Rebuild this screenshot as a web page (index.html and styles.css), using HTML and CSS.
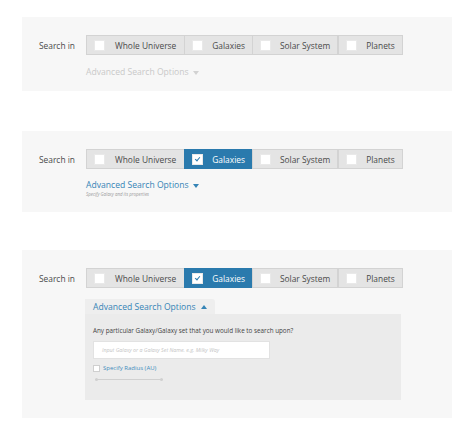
FILE: index.html
```html
<!DOCTYPE html>
<html lang="en">
<head>
    <meta charset="UTF-8">
    <title>Search Options</title>
    <link rel="stylesheet" href="styles.css">
</head>
<body>
    <!-- collapsed, nothing picked -->
    <div class="panel panel-one">
        <div class="search-row">
            <span class="search-label">Search in</span>
            <div class="tabs">
                <div class="tab tab-wide"><span class="box"></span><span>Whole Universe</span></div>
                <div class="tab"><span class="box"></span><span>Galaxies</span></div>
                <div class="tab"><span class="box"></span><span>Solar System</span></div>
                <div class="tab tab-last"><span class="box"></span><span>Planets</span></div>
            </div>
        </div>
        <div class="advanced">
            <div class="adv-link disabled">Advanced Search Options <span class="arrow down"></span></div>
        </div>
    </div>

    <!-- galaxies picked -->
    <div class="panel panel-two">
        <div class="search-row">
            <span class="search-label">Search in</span>
            <div class="tabs">
                <div class="tab tab-wide"><span class="box"></span><span>Whole Universe</span></div>
                <div class="tab active"><span class="box checked"></span><span>Galaxies</span></div>
                <div class="tab"><span class="box"></span><span>Solar System</span></div>
                <div class="tab tab-last"><span class="box"></span><span>Planets</span></div>
            </div>
        </div>
        <div class="advanced">
            <div class="adv-link">Advanced Search Options <span class="arrow down"></span></div>
            <div class="adv-hint">Specify Galaxy and its properties</div>
        </div>
    </div>

    <!-- options opened -->
    <div class="panel panel-three">
        <div class="search-row">
            <span class="search-label">Search in</span>
            <div class="tabs">
                <div class="tab tab-wide"><span class="box"></span><span>Whole Universe</span></div>
                <div class="tab active"><span class="box checked"></span><span>Galaxies</span></div>
                <div class="tab"><span class="box"></span><span>Solar System</span></div>
                <div class="tab tab-last"><span class="box"></span><span>Planets</span></div>
            </div>
        </div>
        <div class="advanced open">
            <div class="adv-head">Advanced Search Options <span class="arrow up"></span></div>
            <div class="adv-body">
                <p class="question">Any particular Galaxy/Galaxy set that you would like to search upon?</p>
                <div class="galaxy-input">Input Galaxy or a Galaxy Set Name. e.g. Milky Way</div>
                <label class="radius"><span class="small-box"></span>Specify Radius (AU)</label>
                <div class="slider"><span class="knob"></span><span class="knob"></span></div>
            </div>
        </div>
    </div>
</body>
</html>
```

FILE: styles.css
```css
body {
    margin: 0;
    padding-top: 17px;
    background-color: #ffffff;
    font-family: "Open Sans", "DejaVu Sans", sans-serif;
    color: #444444;
}
.panel {
    margin-left: 22px;
    width: 430px;
    background-color: #f7f7f7;
    padding: 18px 0 0 17px;
    box-sizing: border-box;
}
.panel-one {
    height: 74px;
    margin-bottom: 40px;
}
.panel-two {
    height: 81px;
    margin-bottom: 38px;
}
.panel-three {
    height: 168px;
}
.search-row {
    display: flex;
    align-items: center;
}
.search-label {
    width: 47px;
    font-size: 8.4px;
    color: #4a4a4a;
}
.tabs {
    display: flex;
    height: 20px;
}
.tab {
    display: flex;
    align-items: center;
    gap: 9px;
    padding: 0 7px 0 7px;
    background-color: #e4e4e4;
    border: 1px solid #d3d3d3;
    margin-left: -1px;
    font-size: 8.4px;
    color: #4a4a4a;
}
.tab-wide {
    margin-left: 0;
    gap: 10px;
    padding-right: 8px;
}
.tab-last {
    margin-left: 0;
}
.tab.active {
    background-color: #2a7aad;
    border-color: #2a7aad;
    color: #ffffff;
}
.box {
    width: 9px;
    height: 9px;
    background-color: #ffffff;
    border: 1px solid #e9e9e9;
    position: relative;
}
.box.checked::after {
    content: "";
    position: absolute;
    left: 3px;
    top: 1px;
    width: 2px;
    height: 4px;
    border: solid #2a7aad;
    border-width: 0 1.5px 1.5px 0;
    transform: rotate(40deg);
}
.advanced {
    margin-left: 47px;
}
.adv-link {
    font-size: 8.6px;
    line-height: 12px;
    margin-top: 11px;
    color: #3584b6;
    display: flex;
    align-items: center;
    gap: 4px;
}
.adv-link.disabled {
    color: #c9c9c9;
}
.panel-two .adv-link {
    margin-top: 10px;
}
.adv-hint {
    font-size: 4.4px;
    line-height: 6px;
    font-style: italic;
    color: #9a9a9a;
}
.arrow {
    width: 0;
    height: 0;
    border-left: 3px solid transparent;
    border-right: 3px solid transparent;
}
.arrow.down {
    border-top: 4px solid currentColor;
    margin-top: 1px;
}
.adv-link.disabled .arrow.down {
    border-top-color: #d2d2d2;
}
.arrow.up {
    border-bottom: 4px solid currentColor;
}
.open {
    margin-top: 11px;
    margin-left: 46px;
    width: 316px;
}
.adv-head {
    display: flex;
    align-items: center;
    gap: 5px;
    width: 130px;
    height: 15px;
    box-sizing: border-box;
    padding-left: 8px;
    background-color: #eeeeee;
    border-top-right-radius: 3px;
    font-size: 8.6px;
    color: #3584b6;
}
.adv-body {
    background-color: #ebebeb;
    height: 86px;
    padding: 13px 8px 0 8px;
    box-sizing: border-box;
}
.question {
    margin: 0;
    font-size: 6.3px;
    line-height: 8px;
    color: #444444;
}
.galaxy-input {
    margin-top: 6px;
    width: 177px;
    height: 18px;
    box-sizing: border-box;
    background-color: #ffffff;
    border: 1px solid #e2e2e2;
    padding-left: 8px;
    display: flex;
    align-items: center;
    font-size: 5.3px;
    font-style: italic;
    color: #c4c4c4;
}
.radius {
    display: flex;
    align-items: center;
    gap: 3px;
    margin-top: 5px;
    height: 8px;
    font-size: 6px;
    color: #3f8cbd;
}
.small-box {
    width: 5px;
    height: 5px;
    background-color: #ffffff;
    border: 1px solid #cfcfcf;
}
.slider {
    margin: 7px 0 0 2px;
    width: 68px;
    height: 1px;
    background-color: #d0d0d0;
    display: flex;
    justify-content: space-between;
    align-items: center;
}
.knob {
    width: 3px;
    height: 3px;
    border-radius: 50%;
    background-color: #d0d0d0;
}
```
